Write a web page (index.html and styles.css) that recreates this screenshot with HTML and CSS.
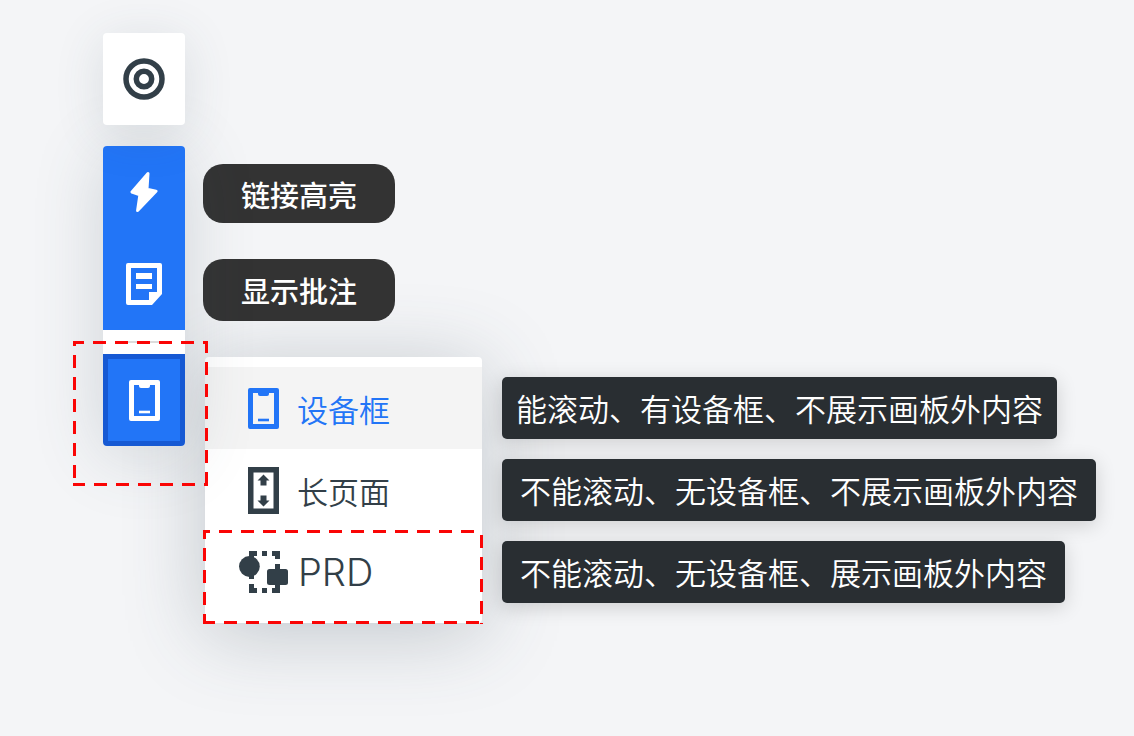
FILE: index.html
```html
<!DOCTYPE html>
<html lang="zh-CN">
<head>
    <meta charset="UTF-8">
    <meta name="viewport" content="width=device-width, initial-scale=1">
    <title>预览工具栏</title>
    <link rel="stylesheet" href="styles.css">
</head>
<body>
    <main class="page">
        <nav class="rail">
            <button type="button" class="rail-button rail-home" aria-label="定位">
                <svg width="42" height="42" viewBox="0 0 42 42" fill="none" stroke="currentColor">
                    <circle cx="21" cy="21" r="18" stroke-width="5.5"/>
                    <circle cx="21" cy="21" r="7.7" stroke-width="5.5"/>
                </svg>
            </button>
            <div class="rail-group">
                <button type="button" class="rail-button active" aria-label="链接高亮">
                    <svg width="28" height="42" viewBox="0 0 28 42" fill="currentColor" stroke="currentColor" stroke-width="3" stroke-linejoin="round">
                        <path d="M18 2.5 2 21 9.9 23.8 7.6 39.5 26 20.2 17 18.2Z"/>
                    </svg>
                </button>
                <button type="button" class="rail-button active" aria-label="显示批注">
                    <svg width="36" height="42" viewBox="0 0 36 42" fill="currentColor">
                        <path fill-rule="evenodd" d="M2 0H34Q36 0 36 2V31L26 42H2Q0 42 0 40V2Q0 0 2 0ZM5 5V37H23V29H31V5Z"/>
                        <path d="M10 10H26V16H10ZM10 21H26V26H10Z"/>
                    </svg>
                </button>
                <div class="rail-divider"></div>
                <div class="rail-current">
                    <button type="button" class="rail-button active pressed" aria-label="设备框">
                        <svg width="31" height="41" viewBox="0 0 31 41" fill="currentColor">
                            <path fill-rule="evenodd" d="M2 0H29Q31 0 31 2V39Q31 41 29 41H2Q0 41 0 39V2Q0 0 2 0ZM5 5V36H26V5H21V6Q21 8 19 8H12Q10 8 10 6V5Z"/>
                            <path d="M10 30.7H21V33.3H10Z"/>
                        </svg>
                    </button>
                    <svg class="marker marker-button" width="135" height="146" viewBox="0 0 135 146" aria-hidden="true">
                        <path d="M-2 1.5H135M133.5 -1V146M-1 143.5H135M1.5 -8V145"/>
                    </svg>
                </div>
            </div>
        </nav>

        <div class="content">
            <div class="label">链接高亮</div>
            <div class="label label-note">显示批注</div>

            <div class="options">
                <div class="menu">
                    <button type="button" class="menu-item selected">
                        <span class="menu-icon">
                            <svg width="31" height="41" viewBox="0 0 31 41" fill="currentColor">
                                <path fill-rule="evenodd" d="M2 0H29Q31 0 31 2V39Q31 41 29 41H2Q0 41 0 39V2Q0 0 2 0ZM5 5V36H26V5H21V6Q21 8 19 8H12Q10 8 10 6V5Z"/>
                                <path d="M10 30.7H21V33.3H10Z"/>
                            </svg>
                        </span>
                        设备框
                    </button>
                    <button type="button" class="menu-item">
                        <span class="menu-icon">
                            <svg width="31" height="47" viewBox="0 0 31 47" fill="currentColor">
                                <path fill-rule="evenodd" d="M0 0H31V47H0ZM5.5 5.5V41.5H25.5V5.5Z"/>
                                <path d="M15.5 7.5 21.5 13.5H18.5V18.5H12.5V13.5H9.5ZM15.5 39.5 21.5 33.5H18.5V28.5H12.5V33.5H9.5Z"/>
                            </svg>
                        </span>
                        长页面
                    </button>
                    <button type="button" class="menu-item latin">
                        <span class="menu-icon">
                            <svg width="49" height="42" viewBox="0 0 49 42" fill="currentColor">
                                <path d="M10 0H18V5H15V28H10ZM23 0H28V5H23ZM33 0H41V8H36V5H33ZM36 13H41V42H33V37H36ZM23 37H28V42H23ZM10 33H15V37H18V42H10Z"/>
                                <circle cx="10.4" cy="15.5" r="10.4"/>
                                <rect x="28" y="18" width="21" height="16" rx="2.5"/>
                            </svg>
                        </span>
                        PRD
                        <svg class="marker marker-item" width="280" height="94" viewBox="0 0 280 94" aria-hidden="true">
                            <path d="M-6 1.5H280M278.5 -17V94M-1 92.5H280M1.5 -4V94"/>
                        </svg>
                    </button>
                </div>

                <div class="tips">
                    <div class="tip tip-first">能滚动、有设备框、不展示画板外内容</div>
                    <div class="tip">不能滚动、无设备框、不展示画板外内容</div>
                    <div class="tip">不能滚动、无设备框、展示画板外内容</div>
                </div>
            </div>
        </div>
    </main>
</body>
</html>
```
FILE: styles.css
```css
* {
    box-sizing: border-box;
}

body {
    margin: 0;
    background: #f4f5f7;
    color: #323f48;
    font-family: "Noto Sans CJK SC", sans-serif;
}

button {
    border: none;
    padding: 0;
    font: inherit;
    cursor: pointer;
}

svg {
    display: block;
    flex-shrink: 0;
}

.page {
    display: flex;
    align-items: flex-start;
    gap: 18px;
    min-height: 100vh;
    padding: 33px 16px 33px 103px;
}

.rail {
    display: flex;
    flex-direction: column;
    gap: 21px;
    width: 82px;
    flex-shrink: 0;
}

.rail-button {
    display: flex;
    align-items: center;
    justify-content: center;
    width: 100%;
    height: 92px;
    background: #fff;
    color: #323f48;
}

.rail-home {
    position: relative;
    z-index: 1;
    border-radius: 4px;
    box-shadow: 0 8px 50px rgba(60, 80, 95, 0.14);
}

.rail-group {
    position: relative;
    background: #fff;
    border-radius: 4px;
    box-shadow: 0 8px 70px rgba(60, 80, 95, 0.2);
    z-index: 2;
}

/* keeps the group's shadow from tinting the button above it */
.rail-home {
    z-index: 3;
}

.rail-button.active {
    background: #2275f7;
    color: #fff;
}

.rail-group > .rail-button:first-child {
    border-radius: 4px 4px 0 0;
}

.rail-button.pressed {
    border: 5px solid #1659d3;
    border-radius: 0 0 4px 4px;
}

.rail-divider {
    width: 34px;
    height: 2px;
    margin: 11px auto;
    background: #dcdcdc;
}

.rail-current {
    position: relative;
}

.marker {
    position: absolute;
    fill: none;
    stroke: #fa0505;
    stroke-width: 3;
    stroke-dasharray: 13 9;
    pointer-events: none;
}

.marker-button {
    left: -30px;
    top: -13px;
}

.marker-item {
    left: -2px;
    top: -1px;
}

.content {
    padding-top: 131px;
}

.label {
    position: relative;
    display: flex;
    align-items: center;
    justify-content: center;
    width: 192px;
    height: 59px;
    border-radius: 20px;
    background: #333;
    color: #fff;
    font-size: 29px;
    font-weight: 500;
    z-index: 3;
}

.label-note {
    height: 62px;
    margin-top: 36px;
}

.options {
    display: flex;
    align-items: flex-start;
    gap: 20px;
    margin-top: 36px;
    padding-left: 2px;
}

.menu {
    width: 277px;
    flex-shrink: 0;
    padding: 10px 0;
    border-radius: 4px;
    background: #fff;
    box-shadow: 0 10px 80px rgba(60, 80, 95, 0.28);
}

.menu-item {
    position: relative;
    display: flex;
    align-items: center;
    gap: 9px;
    width: 100%;
    height: 82px;
    padding-left: 34px;
    background: #fff;
    color: #323f48;
    font-size: 31px;
    font-weight: 350;
    z-index: 3;
}

.menu-item.selected {
    background: #f4f4f4;
    color: #2275f7;
}

.menu-item.latin {
    gap: 10px;
    font-family: Inter, sans-serif;
    font-size: 38px;
    font-weight: 300;
}

/* the marker on the rail is drawn over the menu's left edge */
.rail-current .marker {
    z-index: 4;
}

.rail {
    position: relative;
    z-index: 4;
}

.menu-icon {
    display: flex;
    justify-content: center;
    width: 49px;
}

.tips {
    display: flex;
    flex-direction: column;
    align-items: flex-start;
    gap: 20px;
    padding-top: 20px;
}

.tip {
    padding: 0 18px;
    border-radius: 5px;
    background: #292e32;
    box-shadow: 0 4px 20px rgba(0, 0, 0, 0.16);
    color: #fff;
    font-size: 31px;
    font-weight: 350;
    line-height: 62px;
    white-space: nowrap;
}

.tip-first {
    padding: 0 14px;
}
```
